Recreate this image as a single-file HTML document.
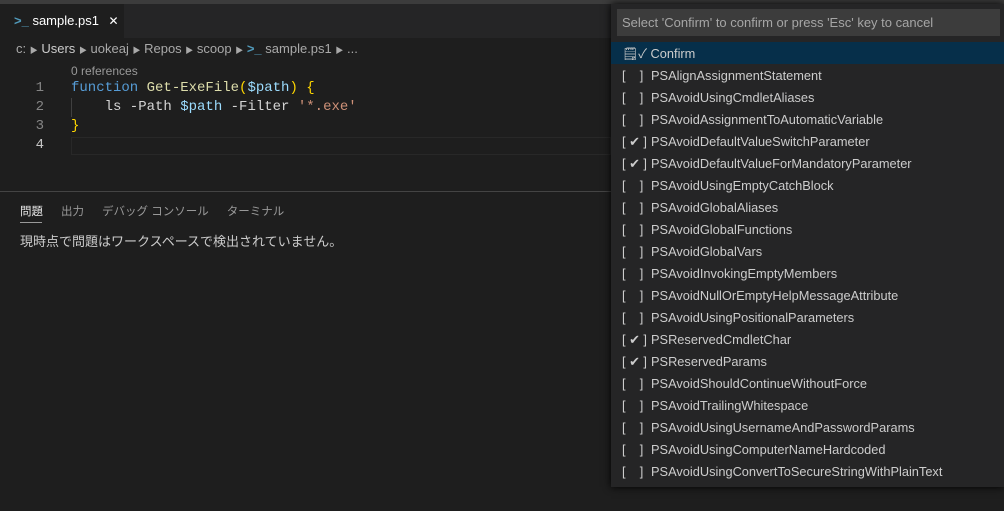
<!DOCTYPE html>
<html><head><meta charset="utf-8"><style>
*{margin:0;padding:0;box-sizing:border-box}
body{width:1004px;height:511px;background:#1e1e1e;position:relative;overflow:hidden;font-family:"Liberation Sans","Noto Sans CJK JP",sans-serif;color:#ccc}
.a{position:absolute;white-space:nowrap}
.mono{font-family:"Liberation Mono",monospace;font-size:14px}
.row{position:absolute;left:0;width:393px;height:22px;line-height:22px;font-size:12.8px;color:#ccc;padding-left:11px}
.row b{font-weight:normal;display:inline-block;width:29px}
</style></head><body>
<div class="a" style="left:0;top:0;width:1004px;height:4px;background:#3c3c3c"></div>
<div class="a" style="left:0;top:4px;width:1004px;height:34px;background:#252526"></div>
<div class="a" style="left:0;top:4px;width:124px;height:34px;background:#1e1e1e"></div>
<div class="a" style="left:14px;top:13px;font-size:13px;color:#fff"><span style="color:#519aba;font-weight:bold">&gt;_</span> sample.ps1 <span style="margin-left:6px;font-size:12px">✕</span></div>
<div class="a" style="left:16px;top:41px;font-size:13px;color:#a9a9a9">c: <span style="font-size:8px">▶</span> <span style="color:#ccc">Users</span> <span style="font-size:8px">▶</span> uokeaj <span style="font-size:8px">▶</span> Repos <span style="font-size:8px">▶</span> scoop <span style="font-size:8px">▶</span> <span style="color:#519aba;font-weight:bold">&gt;_</span> sample.ps1 <span style="font-size:8px">▶</span> ...</div>
<div class="a" style="left:71px;top:64px;font-size:12px;color:#999">0 references</div>
<div class="a" style="left:71px;top:137px;width:540px;height:18px;border:1px solid #282828"></div>
<div class="a mono" style="left:0;top:79px;line-height:19px;width:44px;text-align:right;color:#858585">1<br>2<br>3<br><span style="color:#c6c6c6">4</span></div>
<div class="a mono" style="left:71px;top:79px;line-height:19px;color:#d4d4d4"><span style="color:#569cd6">function</span> <span style="color:#dcdcaa">Get-ExeFile</span><span style="color:#ffd700">(</span><span style="color:#9cdcfe">$path</span><span style="color:#ffd700">)</span> <span style="color:#ffd700">{</span><br>&nbsp;&nbsp;&nbsp;&nbsp;ls -Path <span style="color:#9cdcfe">$path</span> -Filter <span style="color:#ce9178">'*.exe'</span><br><span style="color:#ffd700">}</span></div>
<div class="a" style="left:71px;top:98px;width:1px;height:19px;background:#404040"></div>
<div class="a" style="left:0;top:191px;width:611px;height:1px;background:#444"></div>
<div class="a" style="left:20px;top:203px;font-size:11.5px;color:#999"><span style="color:#e7e7e7">問題</span><span style="margin-left:18px">出力</span><span style="margin-left:18px">デバッグ コンソール</span><span style="margin-left:18px">ターミナル</span></div>
<div class="a" style="left:20px;top:222px;width:22px;height:1px;background:#999"></div>
<div class="a" style="left:20px;top:231px;font-size:13px;color:#ccc">現時点で問題はワークスペースで検出されていません。</div>
<div class="a" style="left:611px;top:4px;width:393px;height:483px;background:#252526;box-shadow:0 0 8px #000">
<div class="a" style="left:6px;top:5px;width:383px;height:27px;background:#3c3c3c;font-size:13px;line-height:27px;padding-left:5px;color:#a6a6a6">Select 'Confirm' to confirm or press 'Esc' key to cancel</div>
<div class="row" style="top:38px;background:#062f4a;line-height:24px">🗒✓ Confirm</div>
<div class="row" style="top:61px"><b>[&nbsp;&nbsp;&nbsp;&nbsp;]</b>PSAlignAssignmentStatement</div>
<div class="row" style="top:83px"><b>[&nbsp;&nbsp;&nbsp;&nbsp;]</b>PSAvoidUsingCmdletAliases</div>
<div class="row" style="top:105px"><b>[&nbsp;&nbsp;&nbsp;&nbsp;]</b>PSAvoidAssignmentToAutomaticVariable</div>
<div class="row" style="top:127px"><b>[ ✔ ]</b>PSAvoidDefaultValueSwitchParameter</div>
<div class="row" style="top:149px"><b>[ ✔ ]</b>PSAvoidDefaultValueForMandatoryParameter</div>
<div class="row" style="top:171px"><b>[&nbsp;&nbsp;&nbsp;&nbsp;]</b>PSAvoidUsingEmptyCatchBlock</div>
<div class="row" style="top:193px"><b>[&nbsp;&nbsp;&nbsp;&nbsp;]</b>PSAvoidGlobalAliases</div>
<div class="row" style="top:215px"><b>[&nbsp;&nbsp;&nbsp;&nbsp;]</b>PSAvoidGlobalFunctions</div>
<div class="row" style="top:237px"><b>[&nbsp;&nbsp;&nbsp;&nbsp;]</b>PSAvoidGlobalVars</div>
<div class="row" style="top:259px"><b>[&nbsp;&nbsp;&nbsp;&nbsp;]</b>PSAvoidInvokingEmptyMembers</div>
<div class="row" style="top:281px"><b>[&nbsp;&nbsp;&nbsp;&nbsp;]</b>PSAvoidNullOrEmptyHelpMessageAttribute</div>
<div class="row" style="top:303px"><b>[&nbsp;&nbsp;&nbsp;&nbsp;]</b>PSAvoidUsingPositionalParameters</div>
<div class="row" style="top:325px"><b>[ ✔ ]</b>PSReservedCmdletChar</div>
<div class="row" style="top:347px"><b>[ ✔ ]</b>PSReservedParams</div>
<div class="row" style="top:369px"><b>[&nbsp;&nbsp;&nbsp;&nbsp;]</b>PSAvoidShouldContinueWithoutForce</div>
<div class="row" style="top:391px"><b>[&nbsp;&nbsp;&nbsp;&nbsp;]</b>PSAvoidTrailingWhitespace</div>
<div class="row" style="top:413px"><b>[&nbsp;&nbsp;&nbsp;&nbsp;]</b>PSAvoidUsingUsernameAndPasswordParams</div>
<div class="row" style="top:435px"><b>[&nbsp;&nbsp;&nbsp;&nbsp;]</b>PSAvoidUsingComputerNameHardcoded</div>
<div class="row" style="top:457px"><b>[&nbsp;&nbsp;&nbsp;&nbsp;]</b>PSAvoidUsingConvertToSecureStringWithPlainText</div>
</div>
</body></html>
